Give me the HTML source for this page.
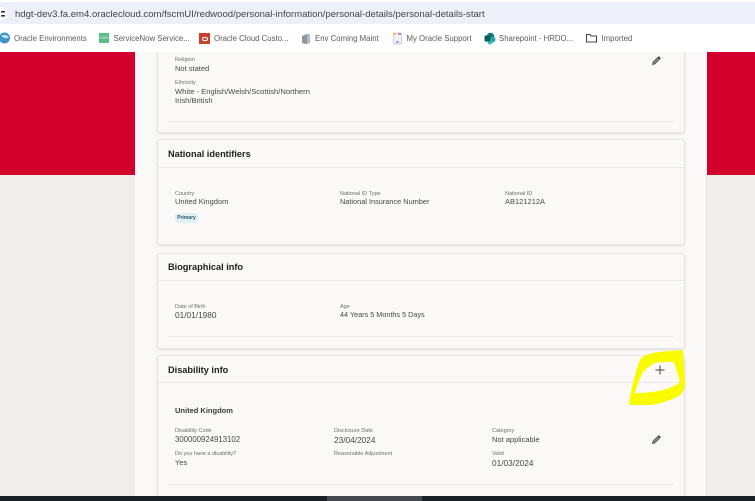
<!DOCTYPE html>
<html><head><meta charset="utf-8">
<style>
html,body{margin:0;padding:0;background:#fff;overflow:hidden;width:755px;height:501px}
body{font-family:"Liberation Sans",sans-serif;color:#3c3a38}
#w{position:absolute;left:0;top:0;width:755px;height:501px;overflow:hidden}
#c{position:absolute;left:0;top:0;width:755px;height:52px;background:#fff}
.a{position:absolute;white-space:nowrap}
.card{position:absolute;left:157px;width:526px;background:#fbf9f8;border:1px solid #e8e6e4;border-radius:3px;box-shadow:0 1px 2px rgba(0,0,0,.12)}
.l{position:absolute;white-space:nowrap;font-size:5.5px;color:#6f6c69;filter:blur(.25px)}
.v{position:absolute;white-space:nowrap;font-size:7.5px;color:#4a4846;filter:blur(.2px)}
.n{font-size:8.3px}
.h{position:absolute;white-space:nowrap;font-size:9.2px;font-weight:bold;color:#1f1e1d;left:168px;filter:blur(.2px)}
.hr{position:absolute;height:1px;background:#ebe9e7}
.b{position:absolute;white-space:nowrap;font-size:7.8px;color:#5b5b5b;top:33.500px;filter:blur(.2px)}
</style></head><body><div id="w">

<div class="a" style="left:0;top:52px;width:755px;height:449px;background:#efeeec"></div>
<div class="a" style="left:0;top:52px;width:135px;height:123px;background:#d2002c"></div>
<div class="a" style="left:707px;top:52px;width:48px;height:123px;background:#d2002c"></div>
<div class="a" style="left:135px;top:52px;width:572px;height:449px;background:#fbf9f8"></div>
<div class="a" style="left:706px;top:175px;width:1px;height:326px;background:#e6e4e2"></div>

<div class="card" style="top:40px;height:91px"></div>
<div class="l" style="left:175px;top:57px">Religion</div>
<div class="v" style="left:175px;top:64px">Not stated</div>
<div class="l" style="left:175px;top:80px">Ethnicity</div>
<div class="v" style="left:175px;top:86.500px;font-size:7.600px">White - English/Welsh/Scottish/Northern</div>
<div class="v" style="left:175px;top:96px;font-size:7.600px">Irish/British</div>
<div class="hr" style="left:168px;top:121px;width:506px"></div>
<svg class="a" style="left:651px;top:55px" width="11" height="11"><path d="M1.500 9.500l.6-2.400 5-5 1.800 1.800-5 5z" fill="#888" stroke="#444" stroke-width=".7"/><path d="M7.500 1.600l1.900 1.900" stroke="#333" stroke-width="1.100"/></svg>

<div class="card" style="top:139px;height:104px"></div>
<div class="h" style="top:148.500px">National identifiers</div>
<div class="hr" style="left:158px;top:167px;width:526px"></div>
<div class="l" style="left:175px;top:190.500px">Country</div>
<div class="v" style="left:175px;top:197px">United Kingdom</div>
<div class="l" style="left:340px;top:190.500px">National ID Type</div>
<div class="v" style="left:340px;top:197px;font-size:7.350px">National Insurance Number</div>
<div class="l" style="left:505px;top:190.500px">National ID</div>
<div class="v" style="left:505px;top:197px">AB121212A</div>
<div class="a" style="left:175px;top:213px;width:23px;height:10px;border-radius:3px;background:#e1f0f5;color:#2e5c6e;font-size:5px;font-weight:bold;line-height:10px;text-align:center">Primary</div>

<div class="card" style="top:253px;height:94px"></div>
<div class="h" style="top:262px">Biographical info</div>
<div class="hr" style="left:158px;top:280px;width:526px"></div>
<div class="l" style="left:175px;top:304px">Date of Birth</div>
<div class="v n" style="left:175px;top:309.500px">01/01/1980</div>
<div class="l" style="left:340px;top:304px">Age</div>
<div class="v" style="left:340px;top:310px;font-size:7.250px">44 Years 5 Months 5 Days</div>
<div class="hr" style="left:168px;top:336px;width:506px"></div>

<div class="card" style="top:355px;height:150px"></div>
<div class="h" style="top:364.500px">Disability info</div>
<div class="hr" style="left:158px;top:382px;width:526px"></div>
<div class="a" style="left:175px;top:405.500px;font-size:7.500px;font-weight:bold;color:#3a3a3a">United Kingdom</div>
<div class="l" style="left:175px;top:428px">Disability Code</div>
<div class="v" style="left:175px;top:434.500px;font-size:7.800px">300000924913102</div>
<div class="l" style="left:334px;top:428px">Disclosure Date</div>
<div class="v n" style="left:334px;top:434.500px">23/04/2024</div>
<div class="l" style="left:492px;top:428px">Category</div>
<div class="v" style="left:492px;top:435px">Not applicable</div>
<div class="l" style="left:175px;top:451px">Do you have a disability?</div>
<div class="v" style="left:175px;top:458px">Yes</div>
<div class="l" style="left:334px;top:451px">Reasonable Adjustment</div>
<div class="l" style="left:492px;top:451px">Valid</div>
<div class="v n" style="left:492px;top:457.500px">01/03/2024</div>
<div class="hr" style="left:168px;top:484px;width:506px"></div>
<svg class="a" style="left:651px;top:434px" width="11" height="11"><path d="M1.500 9.500l.6-2.400 5-5 1.800 1.800-5 5z" fill="#888" stroke="#444" stroke-width=".7"/><path d="M7.500 1.600l1.900 1.900" stroke="#333" stroke-width="1.100"/></svg>

<svg class="a" style="left:625px;top:346px" width="65" height="64"><path fill="#fbfb00" fill-rule="evenodd" d="M4 57C6 44 10 26 15 14C20 7 28 6 58 4L60 37C60 45 56 50 50 52C42 55 34 58 26 59L5 59ZM10 47C24 47 28 46 38 44C46 42 52 39 55 36L49 16C40 16 34 16 30 17C24 20 20 24 18 26C14 34 12 40 10 47Z"/></svg>
<svg class="a" style="left:654px;top:364px" width="12" height="12"><path d="M6 1.500v9M1.500 6h9" stroke="#444" stroke-width="1"/></svg>

<div class="a" style="left:0;top:496px;width:755px;height:5px;background:#1b2026"></div>
<div class="a" style="left:327px;top:496px;width:95px;height:5px;background:#45494d"></div>

<div id="c">
<div class="a" style="left:0;top:2px;width:755px;height:22px;background:#edf0f8"></div>
<div class="a" style="left:-6px;top:7px;width:13px;height:13px;border-radius:50%;background:#fff"></div>
<svg class="a" style="left:0;top:10px" width="6" height="8"><rect x="1" y="1" width="4" height="1.600" fill="#333"/><rect x="1" y="5" width="4" height="1.600" fill="#333"/></svg>
<div class="a" style="left:15px;top:8.500px;font-size:9.55px;color:#444;filter:blur(.2px)">hdgt-dev3.fa.em4.oraclecloud.com/fscmUI/redwood/personal-information/personal-details/personal-details-start</div>

<svg class="a" style="left:0;top:31px" width="11" height="14"><circle cx="4.500" cy="7" r="5.500" fill="#3f93c9"/><path d="M1 5q4-3 8 1q-3 3-8-1z" fill="#bfe0f0"/></svg>
<div class="b" style="left:14px">Oracle Environments</div>
<div class="a" style="left:99px;top:33px;width:10px;height:10px;background:#5bbd8a;color:#d8f3e4;font-size:4px;line-height:10px;text-align:center">GSN</div>
<div class="b" style="left:113.500px">ServiceNow Service...</div>
<div class="a" style="left:199px;top:33px;width:11px;height:11px;background:#c9402c"></div>
<div class="a" style="left:202px;top:37px;width:4px;height:2px;border:1px solid #fff;border-radius:2px"></div>
<div class="b" style="left:214px">Oracle Cloud Custo...</div>
<svg class="a" style="left:301px;top:33px" width="10" height="11"><path d="M1 3l5-2h3v9l-4 1-4-1z" fill="#8b97a3"/><path d="M6 1h3v9l-3 1z" fill="#b4bcc4"/></svg>
<div class="b" style="left:315px">Env Coming Maint</div>
<svg class="a" style="left:392px;top:32px" width="11" height="13"><rect x="1.500" y="1" width="8" height="11" rx="1" fill="#f2f2f6" stroke="#d9c9e6" stroke-width="1"/><rect x="1" y="1" width="3" height="2" fill="#e8c65a"/><rect x="6" y="1" width="3" height="2" fill="#d77fc0"/><rect x="4" y="9" width="3" height="2" fill="#8fb7e0"/></svg>
<div class="b" style="left:406.500px">My Oracle Support</div>
<svg class="a" style="left:484px;top:32px" width="12" height="13"><circle cx="6.500" cy="4.500" r="3.800" fill="#0b7a7c"/><circle cx="8.500" cy="7.500" r="3" fill="#2aa4a6"/><circle cx="6" cy="10" r="2.500" fill="#36bcbc"/><rect x="0.500" y="3.500" width="6" height="6" rx="1" fill="#075e60"/></svg>
<div class="b" style="left:499px">Sharepoint - HRDO...</div>
<svg class="a" style="left:585px;top:32px" width="13" height="12"><path d="M1.500 2.500h3.500l1 1.500h5.500v6h-10z" fill="none" stroke="#444" stroke-width="1.100"/></svg>
<div class="b" style="left:601.500px">Imported</div>
</div>
</div></body></html>
